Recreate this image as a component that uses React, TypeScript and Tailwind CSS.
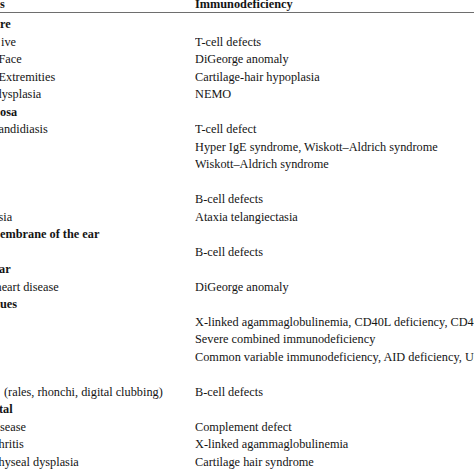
import React from "react";

type Row = { l: string; r: string; bold?: boolean; shift?: number };

const rows: Row[] = [
  { l: "re", r: "", bold: true },
  { l: "ive", r: "T-cell defects", shift: 1 },
  { l: "Face", r: "DiGeorge anomaly", shift: -1.5 },
  { l: "Extremities", r: "Cartilage-hair hypoplasia", shift: -1.5 },
  { l: "dysplasia", r: "NEMO", shift: -4.5 },
  { l: "osa", r: "", bold: true },
  { l: "andidiasis", r: "T-cell defect", shift: -1.5 },
  { l: "", r: "Hyper IgE syndrome, Wiskott–Aldrich syndrome" },
  { l: "", r: "Wiskott–Aldrich syndrome" },
  { l: "", r: "" },
  { l: "", r: "B-cell defects" },
  { l: "sia", r: "Ataxia telangiectasia", shift: -1.5 },
  { l: "embrane of the ear", r: "", bold: true },
  { l: "", r: "B-cell defects" },
  { l: "ar", r: "", bold: true, shift: -1 },
  { l: "heart disease", r: "DiGeorge anomaly", shift: -4.5 },
  { l: "ues", r: "", bold: true, shift: 0 },
  { l: "", r: "X-linked agammaglobulinemia, CD40L deficiency, CD40 deficiency" },
  { l: "", r: "Severe combined immunodeficiency" },
  { l: "", r: "Common variable immunodeficiency, AID deficiency, UNG deficiency" },
  { l: "", r: "" },
  { l: "(rales, rhonchi, digital clubbing)", r: "B-cell defects", shift: 4 },
  { l: "tal", r: "", bold: true, shift: -1 },
  { l: "sease", r: "Complement defect", shift: 0 },
  { l: "hritis", r: "X-linked agammaglobulinemia", shift: -1.5 },
  { l: "hyseal dysplasia", r: "Cartilage hair syndrome", shift: -1.5 },
];

export default function App() {
  return (
    <div
      className="w-[474px] h-[474px] overflow-hidden bg-white text-[#141414] text-[12.3px] leading-[17.5px]"
      style={{ fontFamily: '"Liberation Serif", "Times New Roman", serif' }}
    >
      <div className="mt-[-4px]">
        <div className="grid grid-cols-[195px_1fr] border-b border-[#6e6e6e] font-bold h-[17px] mb-[3px]">
          <div className="whitespace-nowrap overflow-hidden">s</div>
          <div className="whitespace-nowrap">Immunodeficiency</div>
        </div>
        {rows.map((row, i) => (
          <div key={i} className="grid grid-cols-[195px_279px] h-[17.5px]">
            <div className="whitespace-nowrap overflow-hidden">
              <span
                className={row.bold ? "font-bold inline-block" : "inline-block"}
                style={{ marginLeft: row.shift ?? 0 }}
              >
                {row.l}
              </span>
            </div>
            <div className="whitespace-nowrap overflow-hidden">{row.r}</div>
          </div>
        ))}
      </div>
    </div>
  );
}
